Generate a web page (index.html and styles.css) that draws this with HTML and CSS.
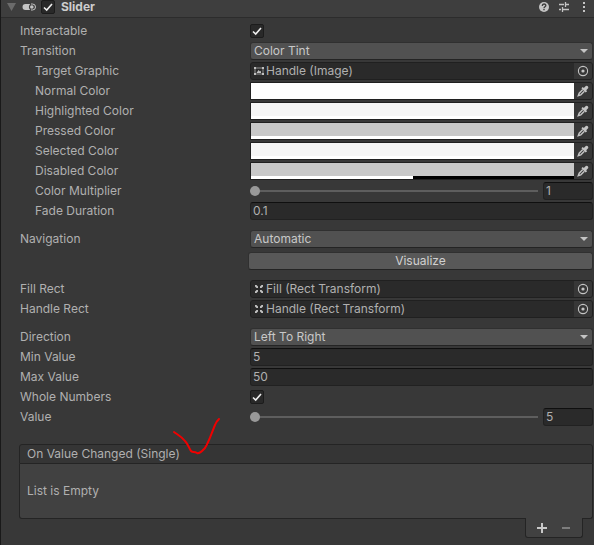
FILE: index.html
```html
<!DOCTYPE html>
<html lang="en">
<head>
<meta charset="utf-8">
<title>Slider component</title>
<link rel="stylesheet" href="styles.css">
</head>
<body>
<svg class="symbols" aria-hidden="true">
  <symbol id="pick" viewBox="0 0 12 12"><circle cx="6" cy="6" r="4.6" fill="none" stroke="currentColor" stroke-width="1.1"/><circle cx="6" cy="6" r="1.6" fill="currentColor"/></symbol>
  <symbol id="dropper" viewBox="0 0 12 12"><path d="M6.800 2.900 8.800.9a1.700 1.700 0 0 1 2.300 2.300L9.200 5.200l.9 1-1.400 1.400-4.300-4.300L5.800 1.900z" fill="currentColor"/><path d="M5.800 4.600 2.200 8.200 1.300 10.700l2.500-.9 3.600-3.600" fill="none" stroke="currentColor" stroke-width="1.400"/></symbol>
  <symbol id="arrow" viewBox="0 0 8 4"><path d="M0 0h8L4 4z" fill="currentColor"/></symbol>
  <symbol id="rect" viewBox="0 0 10 10"><path d="M1 1h1.500l1.500 1.500V4H2.500L1 2.500zM9 1H7.500L6 2.500V4h1.500L9 2.500zM1 9h1.500L4 7.500V6H2.500L1 7.500zM9 9H7.500L6 7.500V6h1.500L9 7.500z" fill="currentColor"/></symbol>
</svg>
<main class="inspector">
  <header class="title">
    <button class="fold" aria-label="Collapse"><svg viewBox="0 0 9 8"><path d="M0 0h9L4.500 8z" fill="#6b6b6b"/></svg></button>
    <svg class="kind" viewBox="0 0 14 8" aria-hidden="true"><path d="M3.500 1h4.700a4.500 4.500 0 0 0 0 6H3.500a3 3 0 0 1 0-6z" fill="#c4c4c4"/><circle cx="9.800" cy="4" r="1.800" fill="#c4c4c4"/><path d="M9 1h1.500a3 3 0 0 1 0 6H9" fill="none" stroke="#c4c4c4"/></svg>
    <input class="check" type="checkbox" id="enabled" checked>
    <label class="name" for="enabled">Slider</label>
    <button class="tool" aria-label="Help"><svg viewBox="0 0 12 12"><circle cx="6" cy="6" r="5" fill="#c4c4c4"/><path d="M4.300 4.900C4.300 2.400 7.800 2.500 7.800 4.500 7.800 5.800 6 5.700 6 7.200M6 8v1.300" fill="none" stroke="#3e3e3e" stroke-width="1.400"/></svg></button>
    <button class="tool" aria-label="Presets"><svg viewBox="0 0 12 12"><path d="M1 3.500h5M8 3.500h3M1 8.500h2M5 8.500h6M7.500 1v5M4.500 6v5" fill="none" stroke="#c4c4c4" stroke-width="1.300"/></svg></button>
    <button class="tool" aria-label="More"><svg viewBox="0 0 12 12"><path d="M5 1h2v2H5zM5 5h2v2H5zM5 9h2v2H5z" fill="#c4c4c4"/></svg></button>
  </header>

  <form class="fields">
    <div class="group">
      <div class="row"><label for="inter">Interactable</label><input class="check" type="checkbox" id="inter" checked></div>
      <div class="row"><label for="trans">Transition</label><div class="drop"><select id="trans"><option>Color Tint</option></select><svg><use href="#arrow"/></svg></div></div>
      <div class="row sub"><label for="target">Target Graphic</label><div class="object"><button type="button" id="target" class="ref"><svg viewBox="0 0 10 10"><path d="M1 2h8v6H1z" fill="none" stroke="currentColor" stroke-width=".7"/><path d="M0 1h2v2H0zM8 1h2v2H8zM0 7h2v2H0zM8 7h2v2H8zM2.500 7 4.500 4 6 5.500 7 4.700V7z" fill="currentColor"/></svg>Handle (Image)</button><button type="button" class="side" aria-label="Select object"><svg><use href="#pick"/></svg></button></div></div>
      <div class="row sub"><label for="c1">Normal Color</label><div class="color"><button type="button" id="c1" class="swatch white"></button><button type="button" class="side" aria-label="Pick color"><svg><use href="#dropper"/></svg></button></div></div>
      <div class="row sub"><label for="c2">Highlighted Color</label><div class="color"><button type="button" id="c2" class="swatch light"></button><button type="button" class="side" aria-label="Pick color"><svg><use href="#dropper"/></svg></button></div></div>
      <div class="row sub"><label for="c3">Pressed Color</label><div class="color"><button type="button" id="c3" class="swatch gray"></button><button type="button" class="side" aria-label="Pick color"><svg><use href="#dropper"/></svg></button></div></div>
      <div class="row sub"><label for="c4">Selected Color</label><div class="color"><button type="button" id="c4" class="swatch light"></button><button type="button" class="side" aria-label="Pick color"><svg><use href="#dropper"/></svg></button></div></div>
      <div class="row sub"><label for="c5">Disabled Color</label><div class="color"><button type="button" id="c5" class="swatch gray half"></button><button type="button" class="side" aria-label="Pick color"><svg><use href="#dropper"/></svg></button></div></div>
      <div class="row sub"><label for="mult">Color Multiplier</label><div class="range"><input type="range" id="mult" min="1" max="5" value="1"><input class="text" type="text" value="1" aria-label="Color Multiplier value"></div></div>
      <div class="row sub"><label for="fade">Fade Duration</label><input class="text" type="text" id="fade" value="0.1"></div>
    </div>
    <div class="group">
      <div class="row"><label for="nav">Navigation</label><div class="drop"><select id="nav"><option>Automatic</option></select><svg><use href="#arrow"/></svg></div></div>
      <div class="row action"><button type="button" class="visualize">Visualize</button></div>
    </div>
    <div class="group">
      <div class="row"><label for="fill">Fill Rect</label><div class="object"><button type="button" id="fill" class="ref"><svg><use href="#rect"/></svg>Fill (Rect Transform)</button><button type="button" class="side" aria-label="Select object"><svg><use href="#pick"/></svg></button></div></div>
      <div class="row"><label for="handle">Handle Rect</label><div class="object"><button type="button" id="handle" class="ref"><svg><use href="#rect"/></svg>Handle (Rect Transform)</button><button type="button" class="side" aria-label="Select object"><svg><use href="#pick"/></svg></button></div></div>
    </div>
    <div class="group">
      <div class="row"><label for="dir">Direction</label><div class="drop"><select id="dir"><option>Left To Right</option></select><svg><use href="#arrow"/></svg></div></div>
      <div class="row"><label for="min">Min Value</label><input class="text" type="text" id="min" value="5"></div>
      <div class="row"><label for="max">Max Value</label><input class="text" type="text" id="max" value="50"></div>
      <div class="row"><label for="whole">Whole Numbers</label><input class="check" type="checkbox" id="whole" checked></div>
      <div class="row"><label for="value">Value</label><div class="range"><input type="range" id="value" min="5" max="50" value="5"><input class="text" type="text" value="5" aria-label="Value number"></div></div>
    </div>
  </form>

  <section class="events">
    <h2>On Value Changed (Single)</h2>
    <p>List is Empty</p>
    <div class="buttons">
      <button aria-label="Add"><svg viewBox="0 0 10 10"><path d="M0 5h10M5 0v10" stroke="#c8c8c8" stroke-width="2"/></svg></button>
      <button aria-label="Remove" disabled><svg viewBox="0 0 10 10"><path d="M1 5h8" stroke="#7d7d7d" stroke-width="2"/></svg></button>
    </div>
    <svg class="mark" viewBox="0 0 50 40" aria-hidden="true"><path d="M3 15C7 18 10 19 14 24C17 27 18 31 20 34C22 36 23 34 26 36C29 37 31 34 34 31C38 25 41 15 44 8C45 5 46 4 48 2" fill="none" stroke="#f00000" stroke-width="2" stroke-linecap="round"/></svg>
  </section>
</main>
</body>
</html>
```
FILE: styles.css
```css
* { box-sizing: border-box; }
body {
  margin: 0;
  background: #383838;
  color: #b0b0b0;
  font: 12px/18px Inter, "Liberation Sans", sans-serif;
}
button, input, select { margin: 0; padding: 0; border: 0; background: none; color: inherit; font: inherit; }
button { display: flex; align-items: center; justify-content: center; }
.symbols { position: absolute; width: 0; height: 0; }
.inspector { min-height: 100vh; border-left: 1px solid #191919; }

.title {
  display: flex;
  align-items: center;
  height: 18px;
  padding: 0 4px 3px 6px;
  background: #3e3e3e;
  border-bottom: 1px solid #2c2c2c;
}
.fold svg { width: 9px; height: 8px; }
.kind { width: 14px; height: 8px; margin: 0 5px 0 6px; }
.name { flex: 1; margin-left: 6px; color: #cdcdcd; font-weight: 700; }
.tool { margin-left: 8px; }
.tool svg { width: 12px; height: 12px; }

.check {
  appearance: none;
  width: 14px;
  height: 14px;
  border: 1px solid #1c1c1c;
  border-radius: 2px;
  background: #292929;
}
.check:checked {
  background: #292929 url("data:image/svg+xml,%3Csvg xmlns='http://www.w3.org/2000/svg' viewBox='0 0 12 12'%3E%3Cpath d='M2 6.500 4.700 9l5.300-6' fill='none' stroke='%23eee' stroke-width='1.600'/%3E%3C/svg%3E") center / 12px 12px;
}

.fields { display: grid; gap: 10px; padding: 4px 1px 0 19px; }
.group { display: grid; gap: 2px; }
.row { display: grid; grid-template-columns: 230px 1fr; align-items: center; height: 18px; }
.sub label { padding-left: 15px; }

.text {
  width: 100%;
  height: 18px;
  padding: 0 2px;
  border: 1px solid #212121;
  border-top-color: #0f0f0f;
  border-radius: 3px;
  background: #2a2a2a;
}
.drop { position: relative; }
.drop select {
  display: block;
  appearance: none;
  width: 100%;
  height: 18px;
  padding-left: 3px;
  border: 1px solid #303030;
  border-bottom-color: #242424;
  border-radius: 3px;
  background: #515151;
  color: #c8c8c8;
  line-height: 16px;
}
.drop svg { position: absolute; right: 5px; top: 7px; width: 8px; height: 4px; color: #c4c4c4; pointer-events: none; }

.object, .color {
  display: flex;
  height: 18px;
  overflow: hidden;
  border: 1px solid #202020;
  border-radius: 3px;
  background: #2a2a2a;
}
.color { border-radius: 0 3px 3px 0; }
.ref { flex: 1; justify-content: flex-start; gap: 2px; padding-left: 3px; }
.ref svg { width: 10px; height: 10px; color: #c0c0c0; }
.side { width: 18px; background: #373737; color: #c4c4c4; }
.side svg { width: 12px; height: 12px; }
.swatch { flex: 1; border-bottom: 3px solid #fff; }
.white { background: #fff; }
.light { background: #f5f5f5; }
.gray { background: #c8c8c8; }
.half { border-bottom: 3px solid; border-image: linear-gradient(90deg, #fff 50%, #000 50%) 1; }

.range { display: grid; grid-template-columns: 1fr 50px; gap: 5px; align-items: center; }
.range input[type="range"] {
  appearance: none;
  width: 100%;
  height: 10px;
  background: linear-gradient(#5e5e5e, #5e5e5e) center / 100% 2px no-repeat;
}
.range input::-webkit-slider-thumb { appearance: none; width: 10px; height: 10px; border-radius: 50%; background: #999; }

.action { display: block; margin-top: 2px; }
.visualize {
  width: calc(100% - 228px);
  height: 18px;
  margin-left: auto;
  border: 1px solid #303030;
  border-bottom-color: #242424;
  border-radius: 3px;
  background: #585858;
  color: #d0d0d0;
}

.events { position: relative; padding: 18px 1px 8px 18px; }
.events h2 {
  margin: 0;
  padding: 0 7px;
  border: 1px solid #242424;
  border-radius: 3px 3px 0 0;
  background: #353535;
  font: inherit;
}
.events p {
  margin: 0;
  padding: 18px 7px;
  border: 1px solid #242424;
  border-top: 0;
  border-radius: 0 0 3px 3px;
  background: #414141;
}
.buttons {
  position: relative;
  display: grid;
  grid-template-columns: 1fr 1fr;
  width: 58px;
  height: 20px;
  margin: -1px 10px 0 auto;
  padding: 0 4px;
  border: 1px solid #242424;
  border-top: 0;
  border-radius: 0 0 3px 3px;
  background: #414141;
}
.buttons svg { width: 10px; height: 10px; }
.mark { position: absolute; left: 170px; top: -9px; width: 50px; height: 40px; }
```
